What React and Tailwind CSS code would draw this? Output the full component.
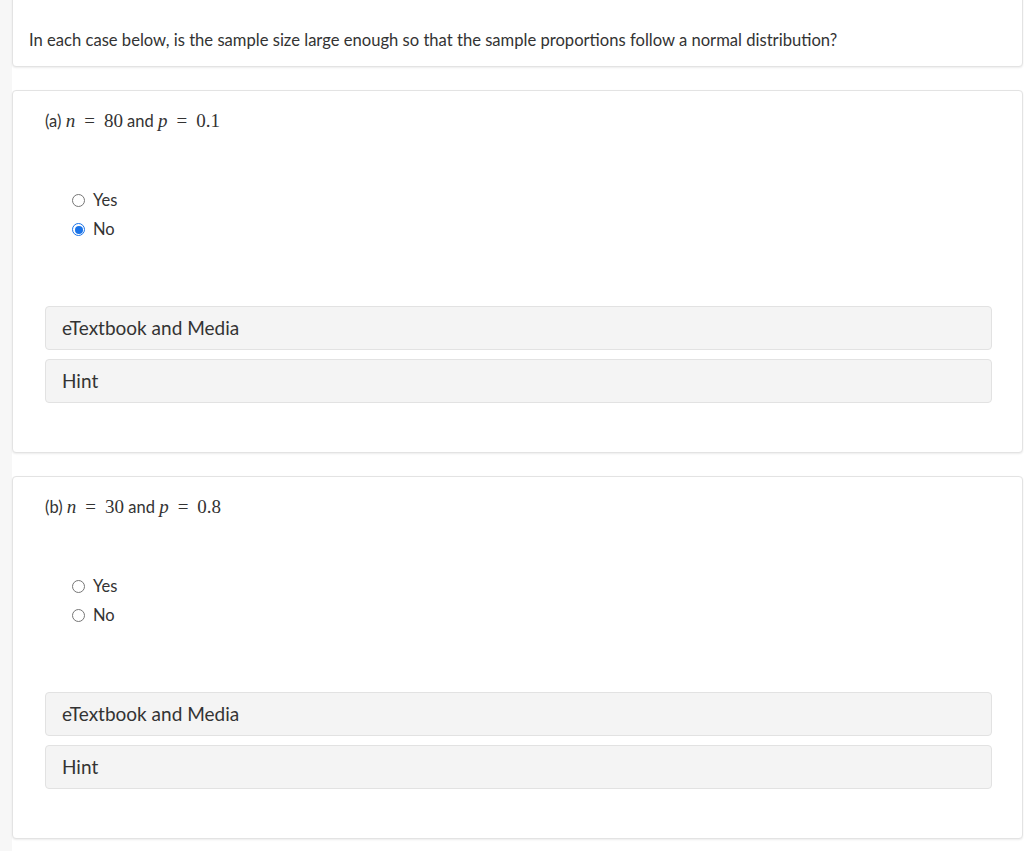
import React from "react";

const parts = [
  { id: "a", n: "80", p: "0.1", answer: "No" },
  { id: "b", n: "30", p: "0.8", answer: null },
];

function Radio({ checked, label }) {
  return (
    <label className="flex items-center h-[29px] gap-[8px]">
      {checked ? (
        <span className="w-[13px] h-[13px] rounded-full border-[1.5px] border-[#1a73e8] flex items-center justify-center">
          <span className="w-[8px] h-[8px] rounded-full bg-[#1a73e8]" />
        </span>
      ) : (
        <span className="w-[13px] h-[13px] rounded-full border border-[#767676] bg-white" />
      )}
      <span className="text-[16.5px]">{label}</span>
    </label>
  );
}

function MathVar({ children }) {
  return <span className="font-['Liberation_Serif',serif] italic text-[19px]">{children}</span>;
}

function MathText({ children, className = "" }) {
  return <span className={`font-['Liberation_Serif',serif] text-[19px] ${className}`}>{children}</span>;
}

function Part({ part }) {
  return (
    <div className="bg-white border border-[#e3e3e3] rounded-[4px] shadow-[0_1px_2px_rgba(0,0,0,0.08)] pl-[32px] pr-[30px] pt-[18px] pb-[49px]">
      <div className="h-[24px] flex items-center text-[16.5px] whitespace-pre">
        <span>({part.id}) </span>
        <MathVar>n</MathVar>
        <MathText className="mx-[9px]">=</MathText>
        <MathText>{part.n}</MathText>
        <span> and </span>
        <MathVar>p</MathVar>
        <MathText className="mx-[9px]">=</MathText>
        <MathText>{part.p}</MathText>
      </div>
      <div className="mt-[53px] pl-[27px] flex flex-col">
        <Radio label="Yes" checked={part.answer === "Yes"} />
        <Radio label="No" checked={part.answer === "No"} />
      </div>
      <div className="mt-[62px] flex flex-col gap-[9px]">
        <div className="h-[44px] flex items-center px-[16px] bg-[#f4f4f4] border border-[#e2e2e2] rounded-[4px] text-[19px]">
          eTextbook and Media
        </div>
        <div className="h-[44px] flex items-center px-[16px] bg-[#f4f4f4] border border-[#e2e2e2] rounded-[4px] text-[19px]">
          Hint
        </div>
      </div>
    </div>
  );
}

export default function App() {
  return (
    <div className="flex min-h-[851px] bg-white text-[#333] font-['Lato','Liberation_Sans',sans-serif] overflow-hidden">
      <div className="w-[12px] shrink-0 bg-[#f7f7f7]" />
      <div className="flex-1 pr-[1px] flex flex-col gap-[23px]">
        <div className="-mt-[20px] bg-white border border-[#e3e3e3] rounded-[4px] shadow-[0_1px_2px_rgba(0,0,0,0.08)] px-[16px] pt-[47px] pb-[14px]">
          <div className="h-[24px] flex items-center text-[16.6px]">
            In each case below, is the sample size large enough so that the sample proportions follow a normal distribution?
          </div>
        </div>
        {parts.map((part) => (
          <Part key={part.id} part={part} />
        ))}
      </div>
    </div>
  );
}
